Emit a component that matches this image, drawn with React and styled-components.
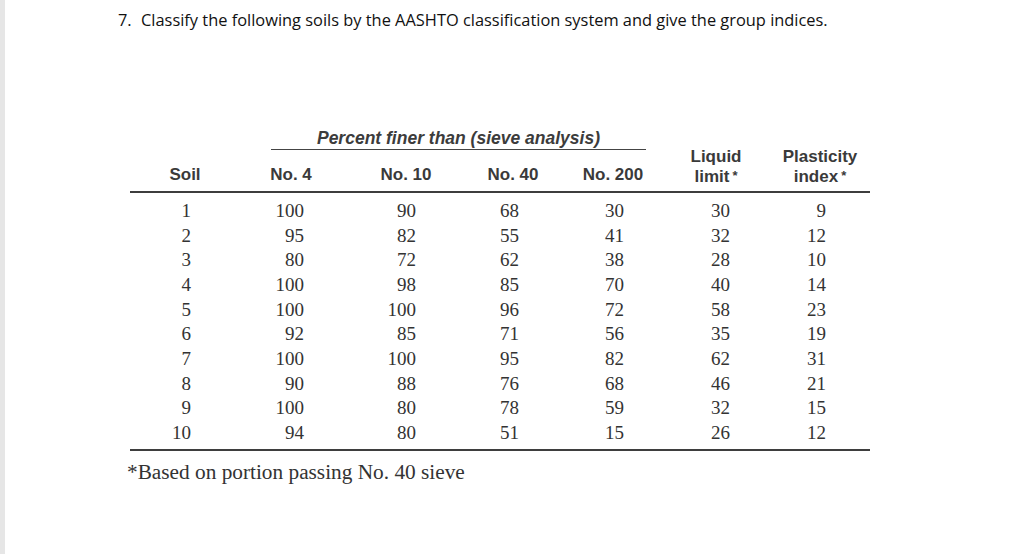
import React from 'react';
import styled, { createGlobalStyle } from 'styled-components';

const GlobalStyle = createGlobalStyle`
  html, body {
    margin: 0;
    padding: 0;
    background: #ffffff;
  }
`;

// column widths shared by header and body grids
const COLS = '110px 102px 128px 86px 114px 92px 108px';

const soils = [
  [1, 100, 90, 68, 30, 30, 9],
  [2, 95, 82, 55, 41, 32, 12],
  [3, 80, 72, 62, 38, 28, 10],
  [4, 100, 98, 85, 70, 40, 14],
  [5, 100, 100, 96, 72, 58, 23],
  [6, 92, 85, 71, 56, 35, 19],
  [7, 100, 100, 95, 82, 62, 31],
  [8, 90, 88, 76, 68, 46, 21],
  [9, 100, 80, 78, 59, 32, 15],
  [10, 94, 80, 51, 15, 26, 12],
];

// right padding per column so numbers line up like the scan
const padRight = [49, 38, 54, 37, 46, 32, 44];

const Page = styled.div`
  display: flex;
  min-height: 554px;
`;

const Gutter = styled.div`
  width: 5px;
  flex: none;
  background: #e6e6e6;
`;

const Sheet = styled.div`
  flex: 1;
  padding-top: 10px;
`;

const Question = styled.p`
  margin: 0 0 0 113px;
  display: flex;
  font-family: 'Open Sans', 'Liberation Sans', sans-serif;
  font-size: 16.4px;
  line-height: 20px;
  color: #111;
`;

const QNum = styled.span`
  width: 23px;
  flex: none;
`;

const Figure = styled.div`
  margin: 98px 0 0 125px;
  width: 740px;
`;

const HeadGrid = styled.div`
  display: grid;
  grid-template-columns: ${COLS};
  grid-template-rows: 22px 41px;
  font-family: 'Liberation Sans', Arial, sans-serif;
  font-weight: bold;
  color: #3a3a3a;
`;

const Spanner = styled.div`
  grid-column: 2 / 6;
  grid-row: 1;
  margin: 0 24px 0 31px;
  border-bottom: 1.5px solid #444;
  text-align: center;
  font-style: italic;
  font-size: 17.5px;
  line-height: 20px;
  white-space: nowrap;
  color: #3c3c3c;
`;

const ColHead = styled.div`
  grid-row: ${(p) => (p.$tall ? '1 / 3' : '2')};
  align-self: end;
  text-align: center;
  padding: 0 0 ${(p) => (p.$tall ? 5 : 7)}px ${(p) => p.$dx || 0}px;
  font-size: 17px;
  line-height: 19px;
  white-space: nowrap;
`;

const Star = styled.span`
  margin-left: 3px;
  font-size: 13px;
  vertical-align: 2px;
`;

const BodyGrid = styled.div`
  display: grid;
  grid-template-columns: ${COLS};
  grid-auto-rows: 24.67px;
  padding: 6px 0 3px;
  border-top: 2px solid #3e3e3e;
  border-bottom: 2px solid #3e3e3e;
  font-family: 'Liberation Serif', 'Times New Roman', serif;
  font-size: 19px;
  color: #333;
`;

const Num = styled.div`
  text-align: right;
  padding-right: ${(p) => p.$pr}px;
  line-height: 24.67px;
`;

const Note = styled.p`
  margin: 9px 0 0 -3px;
  font-family: 'Liberation Serif', 'Times New Roman', serif;
  font-size: 21.3px;
  line-height: 24px;
  color: #333;
`;

export default function App() {
  return (
    <>
      <GlobalStyle />
      <Page>
        <Gutter />
        <Sheet>
          <Question>
            <QNum>7.</QNum>
            <span>
              Classify the following soils by the AASHTO classification system and give the group indices.
            </span>
          </Question>
          <Figure>
            <HeadGrid>
              <Spanner>Percent finer than (sieve analysis)</Spanner>
              <ColHead>Soil</ColHead>
              <ColHead>No. 4</ColHead>
              <ColHead>No. 10</ColHead>
              <ColHead>No. 40</ColHead>
              <ColHead>No. 200</ColHead>
              <ColHead $tall>
                Liquid
                <br />
                limit<Star>*</Star>
              </ColHead>
              <ColHead $tall $dx={8}>
                Plasticity
                <br />
                index<Star>*</Star>
              </ColHead>
            </HeadGrid>
            <BodyGrid>
              {soils.map((row) =>
                row.map((v, i) => (
                  <Num key={row[0] + '-' + i} $pr={padRight[i]}>
                    {v}
                  </Num>
                ))
              )}
            </BodyGrid>
            <Note>*Based on portion passing No. 40 sieve</Note>
          </Figure>
        </Sheet>
      </Page>
    </>
  );
}
